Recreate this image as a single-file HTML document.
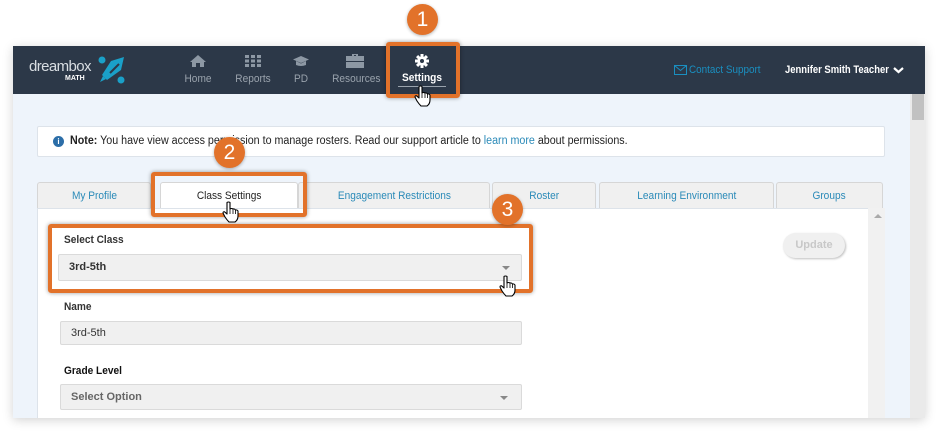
<!DOCTYPE html>
<html><head><meta charset="utf-8"><style>
*{box-sizing:border-box;margin:0;padding:0}
body{width:938px;height:432px;background:#fff;font-family:"Liberation Sans",sans-serif;position:relative;overflow:hidden;font-size:12px}
.abs{position:absolute}
.win{left:13px;top:46px;width:912px;height:372px;background:#eef4fb;box-shadow:0 2px 10px rgba(0,0,0,.18)}
.hdr{left:13px;top:46px;width:912px;height:48px;background:#2c3848}
.nav{color:#9aa3ad;font-size:11px;text-align:center;transform:scaleX(.92)}
.orange{border:4px solid #e2722a;border-radius:3px;box-shadow:0 0 4px rgba(0,0,0,.4)}
.circ{width:31px;height:31px;border-radius:50%;background:#e2722a;color:#fff;font-size:21px;text-align:center;line-height:31px;box-shadow:0 1px 3px rgba(0,0,0,.3)}
.tab{top:182px;height:27px;background:#f0f0f0;border:1px solid #d6d6d6;border-bottom:none;border-radius:3px 3px 0 0;color:#2a8ab8;font-size:11px;text-align:center;line-height:26px}
.tab span{display:inline-block;transform:scaleX(.92)}
.lbl{font-size:11px;font-weight:bold;color:#333;transform:scaleX(.92);transform-origin:left}
.field{background:#f0f0f0;border:1px solid #dadada;border-radius:2px;font-size:11px;padding-left:10px}
.tri{width:0;height:0;border-left:4px solid transparent;border-right:4px solid transparent;border-top:4px solid #888}
</style></head><body>
<div class="abs win"></div>
<div class="abs hdr"></div>
<!-- logo -->
<div class="abs" style="left:29px;top:58px;color:#d8dde2;font-size:15px;letter-spacing:-.6px">dreambox</div>
<div class="abs" style="left:65px;top:75px;color:#fff;font-size:7px;font-weight:bold">MATH</div>
<svg class="abs" style="left:97px;top:55px" width="30" height="30" viewBox="0 0 30 30">
<circle cx="5" cy="5" r="3.5" fill="#1aa0c8"/><circle cx="24" cy="25" r="3.5" fill="#1aa0c8"/>
<path d="M27 2 L14 6 L5 20 L10 25 L24 15 Z" fill="#1aa0c8"/><path d="M3 27 L6 21 L9 24 Z" fill="#1aa0c8"/>
<path d="M13 18 L22 9" stroke="#2c3848" stroke-width="2"/></svg>
<!-- nav -->
<svg class="abs" style="left:190px;top:55px" width="16" height="12" viewBox="0 0 16 12"><path d="M8 0 L16 7 L14 7 L14 12 L10 12 L10 8 L6 8 L6 12 L2 12 L2 7 L0 7Z" fill="#8d98a4"/></svg>
<div class="abs nav" style="left:176px;top:73px;width:44px">Home</div>
<svg class="abs" style="left:245px;top:55px" width="16" height="12"><g fill="#8d98a4"><rect x="0" y="0" width="4" height="3"/><rect x="6" y="0" width="4" height="3"/><rect x="12" y="0" width="4" height="3"/><rect x="0" y="4.5" width="4" height="3"/><rect x="6" y="4.5" width="4" height="3"/><rect x="12" y="4.5" width="4" height="3"/><rect x="0" y="9" width="4" height="3"/><rect x="6" y="9" width="4" height="3"/><rect x="12" y="9" width="4" height="3"/></g></svg>
<div class="abs nav" style="left:230px;top:73px;width:46px">Reports</div>
<svg class="abs" style="left:293px;top:56px" width="16" height="10"><path d="M8 0 L16 3.5 L8 7 L0 3.5Z M3 5 L3 9 Q8 11 13 9 L13 5 L8 7.5Z" fill="#8d98a4"/></svg>
<div class="abs nav" style="left:290px;top:73px;width:22px">PD</div>
<svg class="abs" style="left:346px;top:54px" width="18" height="14"><path d="M6 0 H12 V2 H18 V14 H0 V2 H6Z" fill="#8d98a4"/><rect x="8" y="1" width="2" height="1" fill="#2c3848"/><rect x="0" y="7" width="18" height="1" fill="#2c3848"/></svg>
<div class="abs nav" style="left:330px;top:73px;width:52px">Resources</div>
<svg class="abs" style="left:415px;top:54px" width="14" height="14" viewBox="0 0 14 14"><g fill="#fff"><circle cx="7" cy="7" r="4.6"/><rect x="5.5" y="0" width="3" height="14"/><rect x="0" y="5.5" width="14" height="3"/><rect x="5.5" y="0" width="3" height="14" transform="rotate(45 7 7)"/><rect x="5.5" y="0" width="3" height="14" transform="rotate(-45 7 7)"/></g><circle cx="7" cy="7" r="2" fill="#2c3848"/></svg>
<div class="abs" style="left:400px;top:72px;color:#fff;font-size:11px;font-weight:bold;width:44px;text-align:center;transform:scaleX(.92)">Settings</div>
<div class="abs" style="left:398px;top:86px;width:48px;height:1px;background:#9aa3ad"></div>
<!-- right header -->
<svg class="abs" style="left:674px;top:65px" width="13" height="10"><rect x=".5" y=".5" width="12" height="9" fill="none" stroke="#1a8fc0"/><path d="M.5 .5 L6.5 5.5 L12.5 .5" fill="none" stroke="#1a8fc0"/></svg>
<div class="abs" style="left:689px;top:64px;color:#1a8fc0;font-size:11px;transform:scaleX(.9);transform-origin:left">Contact Support</div>
<div class="abs" style="left:785px;top:64px;color:#fff;font-size:11px;font-weight:bold;transform:scaleX(.86);transform-origin:left;white-space:nowrap">Jennifer Smith Teacher</div>
<svg class="abs" style="left:893px;top:67px" width="11" height="7"><path d="M1 1 L5.5 5 L10 1" stroke="#fff" stroke-width="2.2" fill="none"/></svg>
<!-- scrollbar -->
<div class="abs" style="left:910px;top:94px;width:15px;height:324px;background:#eaeaea"></div>
<div class="abs" style="left:912px;top:94px;width:12px;height:26px;background:#c1c1c1"></div>
<!-- note -->
<div class="abs" style="left:37px;top:126px;width:848px;height:31px;background:#fff;border:1px solid #dde3ea;border-radius:2px"></div>
<div class="abs" style="left:53px;top:136px;width:11px;height:11px;border-radius:50%;background:#2c6ea8;color:#fff;font-size:8px;font-weight:bold;text-align:center;line-height:11px">i</div>
<div class="abs" style="left:70px;top:135px;font-size:11.5px;color:#222;white-space:nowrap;transform:scaleX(.93);transform-origin:left"><b>Note:</b> You have view access permission to manage rosters. Read our support article to <span style="color:#2a8ab8">learn more</span> about permissions.</div>
<!-- tabs -->
<div class="abs tab" style="left:37px;width:114px"><span>My Profile</span></div>
<div class="abs tab" style="left:160px;width:138px;background:#fff;color:#222"><span>Class Settings</span></div>
<div class="abs tab" style="left:298px;width:192px"><span>Engagement Restrictions</span></div>
<div class="abs tab" style="left:492px;width:104px"><span>Roster</span></div>
<div class="abs tab" style="left:599px;width:175px"><span>Learning Environment</span></div>
<div class="abs tab" style="left:776px;width:107px"><span>Groups</span></div>
<!-- panel -->
<div class="abs" style="left:37px;top:208px;width:848px;height:210px;background:#fff;border-left:1px solid #dde3ea;border-top:1px solid #dde3ea"></div>
<div class="abs" style="left:868px;top:208px;width:17px;height:210px;background:#f1f1f1"></div>
<div class="abs" style="left:874px;top:214px;width:0;height:0;border-left:4px solid transparent;border-right:4px solid transparent;border-bottom:4px solid #aaa"></div>
<div class="abs" style="left:783px;top:233px;width:62px;height:25px;border-radius:13px;background:#f0f0f0;box-shadow:1px 1px 2px rgba(0,0,0,.25);color:#c8c8c8;font-weight:bold;font-size:11px;text-align:center;line-height:25px">Update</div>
<div class="abs lbl" style="left:64px;top:234px">Select Class</div>
<div class="abs field" style="left:58px;top:254px;width:464px;height:27px;line-height:25px;font-weight:bold;color:#333">3rd-5th</div>
<div class="abs tri" style="left:502px;top:266px"></div>
<div class="abs lbl" style="left:64px;top:301px">Name</div>
<div class="abs field" style="left:60px;top:321px;width:462px;height:24px;line-height:22px;color:#333">3rd-5th</div>
<div class="abs lbl" style="left:64px;top:365px;color:#111">Grade Level</div>
<div class="abs field" style="left:60px;top:384px;width:462px;height:26px;line-height:24px;font-weight:bold;color:#666">Select Option</div>
<div class="abs tri" style="left:500px;top:396px"></div>
<!-- orange callouts -->
<div class="abs orange" style="left:386px;top:42px;width:74px;height:56px"></div>
<div class="abs orange" style="left:151px;top:172px;width:156px;height:45px"></div>
<div class="abs orange" style="left:48px;top:224px;width:485px;height:69px"></div>
<div class="abs circ" style="left:407px;top:4px">1</div>
<div class="abs circ" style="left:214px;top:137px">2</div>
<div class="abs circ" style="left:492px;top:194px">3</div>
<!-- hand cursors -->
<svg class="abs" style="left:414px;top:85px" width="18" height="22" viewBox="0 0 18 22"><path d="M5 1.5 Q6.5 0.5 8 1.5 L8 8 Q9.5 7 11 8 Q12.5 7.5 13.5 9 Q15 8.5 16 10 L16 15 Q16 19 13 21 L7 21 Q5 19 3 16 L1 12 Q1 10.5 2.5 10.8 L5 13 Z" fill="#fff" stroke="#000" stroke-width="1.1" stroke-linejoin="round"/><path d="M8 8 V13 M11 8 V13 M13.5 9 V13" stroke="#000" stroke-width=".8"/></svg>
<svg class="abs" style="left:222px;top:201px" width="18" height="22" viewBox="0 0 18 22"><path d="M5 1.5 Q6.5 0.5 8 1.5 L8 8 Q9.5 7 11 8 Q12.5 7.5 13.5 9 Q15 8.5 16 10 L16 15 Q16 19 13 21 L7 21 Q5 19 3 16 L1 12 Q1 10.5 2.5 10.8 L5 13 Z" fill="#fff" stroke="#000" stroke-width="1.1" stroke-linejoin="round"/><path d="M8 8 V13 M11 8 V13 M13.5 9 V13" stroke="#000" stroke-width=".8"/></svg>
<svg class="abs" style="left:499px;top:275px" width="18" height="22" viewBox="0 0 18 22"><path d="M5 1.5 Q6.5 0.5 8 1.5 L8 8 Q9.5 7 11 8 Q12.5 7.5 13.5 9 Q15 8.5 16 10 L16 15 Q16 19 13 21 L7 21 Q5 19 3 16 L1 12 Q1 10.5 2.5 10.8 L5 13 Z" fill="#fff" stroke="#000" stroke-width="1.1" stroke-linejoin="round"/><path d="M8 8 V13 M11 8 V13 M13.5 9 V13" stroke="#000" stroke-width=".8"/></svg>
</body></html>
